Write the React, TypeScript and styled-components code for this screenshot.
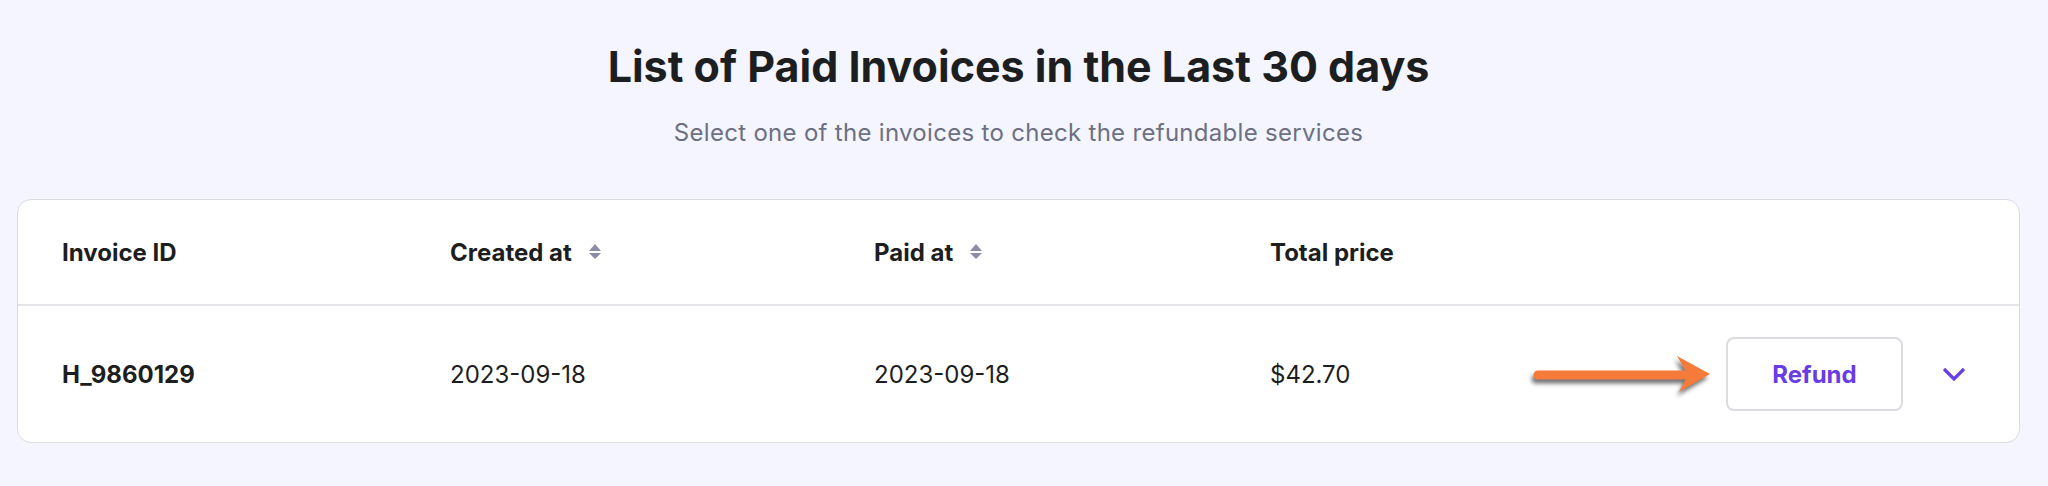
import styled, { createGlobalStyle } from 'styled-components';

const GlobalStyle = createGlobalStyle`
  body {
    margin: 0;
    background: #f4f5ff;
    font-family: Inter, "Liberation Sans", sans-serif;
    color: #1d1e20;
  }
`;

const Page = styled.main`
  padding: 42px 28px 40px 17px;
`;

const Intro = styled.header`
  text-align: center;
`;

const Title = styled.h1`
  margin: 0;
  font-size: 43px;
  line-height: 48px;
  font-weight: 700;
`;

const Subtitle = styled.p`
  margin: 27px 0 0;
  font-size: 24px;
  line-height: 32px;
  letter-spacing: 0.3px;
  color: #6d7081;
`;

const Card = styled.section`
  margin-top: 50px;
  background: #fff;
  border: 1px solid #dadce0;
  border-radius: 14px;
  overflow: hidden;
`;

const Row = styled.div<{ $head?: boolean }>`
  display: grid;
  grid-template-columns: 388px 424px 396px 1fr auto;
  align-items: center;
  height: ${(p) => (p.$head ? '104px' : '136px')};
  padding: 0 44px 0 44px;
  border-top: ${(p) => (p.$head ? 'none' : '2px solid #e3e4e8')};
`;

const HeadCell = styled.div`
  display: flex;
  align-items: center;
  gap: 16px;
  font-size: 24px;
  font-weight: 700;
`;

const Cell = styled.div<{ $strong?: boolean }>`
  font-size: 24px;
  font-weight: ${(p) => (p.$strong ? 700 : 400)};
`;

const Actions = styled.div`
  display: flex;
  align-items: center;
  justify-content: flex-end;
`;

const Pointer = styled.svg`
  display: block;
  margin-right: 14px;
  filter: drop-shadow(-2px 4px 2px rgba(0, 0, 0, 0.55));
`;

const RefundButton = styled.button`
  width: 177px;
  height: 74px;
  background: #fff;
  border: 2px solid #dadce0;
  border-radius: 8px;
  color: #673de6;
  font-family: inherit;
  font-size: 24px;
  font-weight: 700;
  cursor: pointer;
`;

const ExpandButton = styled.button`
  display: flex;
  align-items: center;
  justify-content: center;
  width: 40px;
  height: 40px;
  margin-left: 31px;
  margin-right: 1px;
  padding: 0;
  background: none;
  border: none;
  cursor: pointer;
`;

const SortIcon = () => (
  <svg width="14" height="16" viewBox="0 0 14 16">
    <polygon points="1,7 7,0 13,7" fill="#8c8ca8" />
    <polygon points="1,9 7,15 13,9" fill="#8c8ca8" />
  </svg>
);

const App = () => (
  <>
    <GlobalStyle />
    <Page>
      <Intro>
        <Title>List of Paid Invoices in the Last 30 days</Title>
        <Subtitle>Select one of the invoices to check the refundable services</Subtitle>
      </Intro>
      <Card>
        <Row $head>
          <HeadCell>Invoice ID</HeadCell>
          <HeadCell>
            Created at <SortIcon />
          </HeadCell>
          <HeadCell>
            Paid at <SortIcon />
          </HeadCell>
          <HeadCell>Total price</HeadCell>
        </Row>
        <Row>
          <Cell $strong>H_9860129</Cell>
          <Cell>2023-09-18</Cell>
          <Cell>2023-09-18</Cell>
          <Cell>$42.70</Cell>
          <Actions>
            <Pointer width="182" height="44" viewBox="0 0 182 44">
              <line x1="8" y1="23" x2="158" y2="23" stroke="#f47b3a" strokeWidth="9" strokeLinecap="round" />
              <polygon points="147,4 180,22 149,40 158,23" fill="#f47b3a" />
            </Pointer>
            <RefundButton>Refund</RefundButton>
            <ExpandButton aria-label="Expand">
              <svg width="24" height="16" viewBox="0 0 24 16">
                <path d="M2 3 L12 13 L22 3" fill="none" stroke="#673de6" strokeWidth="3.2" />
              </svg>
            </ExpandButton>
          </Actions>
        </Row>
      </Card>
    </Page>
  </>
);

export default App;
